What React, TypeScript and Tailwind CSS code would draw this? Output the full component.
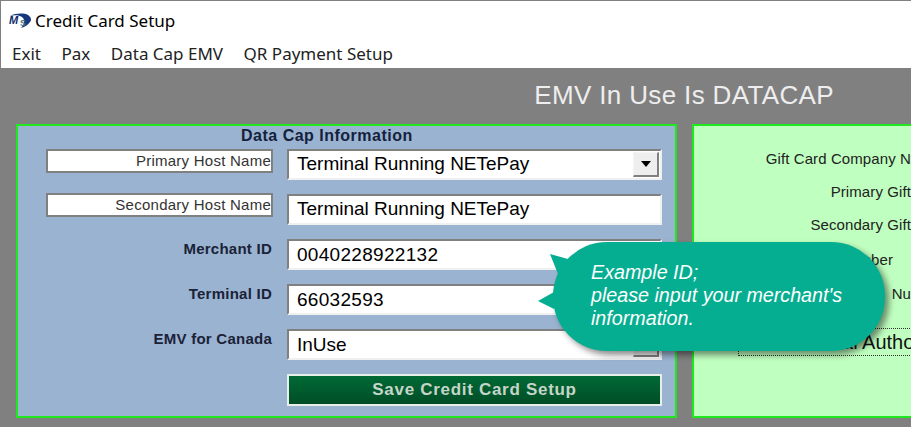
import React from "react";

const sans = "font-['Liberation_Sans',Arial,sans-serif]";
const ui = "font-['Noto_Sans',sans-serif]";

const Logo = () => (
  <svg width="23" height="16" viewBox="0 0 23 16">
    <path d="M1 3 C7 0 15 0 19 2 C22 4 23 7 21 9 C19 12 16 14 12 15 C16 11 16 6 13 4 C10 2 5 2 1 3 Z" fill="#16367f" />
    <text x="0" y="11" fontFamily="Liberation Sans" fontWeight="700" fontStyle="italic" fontSize="11" fill="#102a6c">M</text>
    <text x="11" y="13" fontFamily="Liberation Sans" fontWeight="700" fontSize="9" fill="#3f6f80">S</text>
  </svg>
);

const DropButton = () => (
  <div className="flex h-[25px] w-[26px] shrink-0 items-center justify-center border border-t-[#f4f4f4] border-l-[#f4f4f4] border-r-2 border-b-2 border-r-[#808080] border-b-[#808080] bg-[#eeeeee]">
    <svg width="10" height="6" viewBox="0 0 10 6">
      <path d="M0 0 H10 L5 6 Z" fill="#000" />
    </svg>
  </div>
);

const Field = ({ value, drop, digits, flush }: { value: string; drop?: boolean; digits?: boolean; flush?: boolean }) => (
  <div className={`flex h-[31px] w-[375px] items-center justify-between border-2 border-t-[#808080] border-l-[#808080] border-r-[#f0f0f0] border-b-[#f0f0f0] bg-white pl-[8px] pr-[1px] text-[19px] text-black ${digits ? "tracking-[0.3px]" : ""} ${sans}`}>
    <span className={flush ? "" : "pt-[1px]"}>{value}</span>
    {drop && <DropButton />}
  </div>
);

const BoxLabel = ({ text }: { text: string }) => (
  <div className={`mt-[-1px] flex h-[24px] w-[227px] items-center justify-end border-2 border-[#808080] bg-white text-[15px] tracking-[0.25px] text-[#333333] ${sans}`}>
    {text}
  </div>
);

const BoldLabel = ({ text }: { text: string }) => (
  <div className={`w-[227px] pr-[1px] text-right text-[15px] font-bold leading-[15px] tracking-[0.25px] text-[#1a2238] ${sans}`}>
    {text}
  </div>
);

const GiftLabel = ({ text, mt, pr }: { text: string; mt: string; pr?: string }) => (
  <div className={`${mt} ${pr ?? ""} whitespace-nowrap text-right text-[15px] leading-[15px] tracking-[0.1px] text-[#222222] ${sans}`}>{text}</div>
);

export default function App() {
  return (
    <div className="relative flex h-[427px] w-[911px] flex-col overflow-hidden border-l border-t border-[#808080] bg-[#808080]">
      <div className="bg-white">
        <div className={`flex h-[39px] items-center gap-[3px] pl-[8px] pt-[1px] text-[17px] text-black ${ui}`}>
          <Logo />
          <span>Credit Card Setup</span>
        </div>
        <div className={`flex h-[28px] items-center gap-[20.5px] pl-[11px] text-[17px] text-[#222222] ${ui}`}>
          <span>Exit</span>
          <span>Pax</span>
          <span>Data Cap EMV</span>
          <span>QR Payment Setup</span>
        </div>
      </div>

      <div className="flex h-[56px] items-start justify-end pr-[77px] pt-[10px]">
        <span className={`text-[26px] leading-[34px] tracking-[0.35px] text-[#eeeeee] ${sans}`}>EMV In Use Is DATACAP</span>
      </div>

      <div className="flex items-start gap-[15px] pl-[15px]">
        <div className="h-[294px] w-[661px] shrink-0 border-2 border-[#1fe81f] bg-[#9ab3d0]">
          <div className={`pl-[223px] pt-[1px] text-[16px] font-bold leading-[18px] tracking-[0.5px] text-[#14213d] ${sans}`}>Data Cap Information</div>
          <div className="mt-[4px] flex gap-[14px] pl-[28px]">
            <div className="flex flex-col items-end pt-[1px]">
              <BoxLabel text="Primary Host Name" />
              <div className="mt-[21px]"><BoxLabel text="Secondary Host Name" /></div>
              <div className="mt-[24px]"><BoldLabel text="Merchant ID" /></div>
              <div className="mt-[30px]"><BoldLabel text="Terminal ID" /></div>
              <div className="mt-[30px]"><BoldLabel text="EMV for Canada" /></div>
            </div>
            <div className="flex flex-col gap-[14px]">
              <Field value="Terminal Running NETePay" drop flush />
              <Field value="Terminal Running NETePay" flush />
              <Field value="0040228922132" digits />
              <Field value="66032593" digits />
              <Field value="InUse" drop />
              <button className={`h-[32px] w-[375px] border-2 border-[#e8eee8] bg-gradient-to-b from-[#006a35] to-[#004d26] text-[17px] font-bold tracking-[0.7px] text-[#c5d5c8] ${sans}`}>
                Save Credit Card Setup
              </button>
            </div>
          </div>
        </div>

        <div className="h-[294px] w-[260px] shrink-0 border-2 border-[#1fe81f] bg-[#bfffbf]">
          <div className="w-[217px]">
            <GiftLabel mt="mt-[25px]" text="Gift Card Company N" />
            <GiftLabel mt="mt-[18px]" text="Primary Gift" />
            <GiftLabel mt="mt-[18px]" text="Secondary Gift" />
            <GiftLabel mt="mt-[20px]" pr="pr-[18px]" text="Number" />
            <GiftLabel mt="mt-[19px]" text="Nu" />
          </div>
          <div className={`ml-[44px] mt-[27px] flex h-[28px] w-[240px] items-center whitespace-nowrap border border-dotted border-[#333333] pl-[53px] text-[20px] text-[#111111] ${sans}`}>
            Manual Autho
          </div>
        </div>
      </div>

      {/* callout */}
      <div className="absolute left-[552px] top-[241px] h-[109px] w-[332px] rounded-[54px] bg-[#05ae90] shadow-[4px_4px_6px_rgba(0,0,0,0.45)]">
        <svg className="absolute left-[-15px] top-[12px]" width="40" height="60" viewBox="0 0 40 60">
          <path d="M0 47 L16 38 L16 55 Z" fill="#05ae90" />
          <path d="M12 0 L30 5 L20 20 Z" fill="#05ae90" />
        </svg>
        <div className={`relative pl-[38px] pt-[19px] text-[19.7px] italic leading-[23px] text-white ${sans}`}>
          Example ID;
          <br />
          please input your merchant's
          <br />
          information.
        </div>
      </div>
    </div>
  );
}
